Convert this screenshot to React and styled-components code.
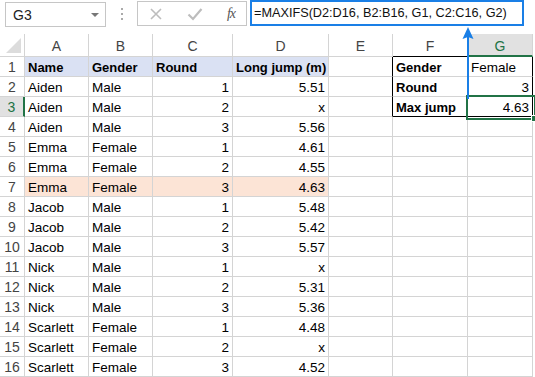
import React from "react";
import styled, { createGlobalStyle } from "styled-components";

const GlobalStyle = createGlobalStyle`
  html, body { margin: 0; padding: 0; background: #fff; }
  body { font-family: "Liberation Sans", Arial, sans-serif; overflow: hidden; }
`;

const GRID = "#d4d4d4";
const GREEN = "#217346";
const BLUE = "#1a7fe6";
const COLS = [25, 64, 64, 80, 96, 64, 75, 65];

const Page = styled.div`
  position: relative;
  width: 535px;
  height: 377px;
  overflow: hidden;
`;

const Toolbar = styled.div`
  display: flex;
  align-items: flex-start;
  height: 27px;
  padding-left: 5px;
`;

const NameBox = styled.div`
  box-sizing: border-box;
  width: 101px;
  height: 25px;
  margin-top: 2px;
  border: 1px solid #c6c6c6;
  display: flex;
  align-items: center;
  justify-content: space-between;
  padding: 0 6px 0 7px;
  font-size: 14px;
  color: #222;
`;

const Caret = styled.span`
  width: 0;
  height: 0;
  border-left: 4px solid transparent;
  border-right: 4px solid transparent;
  border-top: 4px solid #777;
`;

const Dots = styled.div`
  width: 31px;
  height: 27px;
  display: flex;
  flex-direction: column;
  align-items: center;
  justify-content: center;
  gap: 3px;
  span { width: 2px; height: 2px; background: #aaa; }
`;

const Buttons = styled.div`
  box-sizing: border-box;
  width: 110px;
  height: 25px;
  margin-top: 1px;
  border: 1px solid #c6c6c6;
  display: flex;
  align-items: center;
  justify-content: space-between;
  padding: 0 11px 0 11px;
`;

const Fx = styled.span`
  font-family: "Liberation Serif", "Times New Roman", serif;
  font-style: italic;
  font-size: 14px;
  color: #555;
  letter-spacing: -1px;
`;

const FormulaBox = styled.div`
  box-sizing: border-box;
  width: 274px;
  height: 26px;
  margin-left: 3px;
  border: 2px solid ${BLUE};
  display: flex;
  align-items: center;
  padding-left: 2px;
  font-size: 12.7px;
  color: #111;
  white-space: nowrap;
`;

const Sheet = styled.div`
  position: relative;
  margin-top: 7px;
  display: grid;
  grid-template-columns: ${COLS.map((c) => c + "px").join(" ")};
  grid-auto-rows: 20px;
  grid-template-rows: 23px;
`;

const Corner = styled.div`
  position: relative;
  box-sizing: border-box;
  border-right: 1px solid ${GRID};
  border-bottom: 1px solid ${GRID};
  &::after {
    content: "";
    position: absolute;
    right: 3px;
    bottom: 3px;
    width: 0;
    height: 0;
    border-left: 15px solid transparent;
    border-bottom: 15px solid #dcdcdc;
  }
`;

const ColHead = styled.div`
  box-sizing: border-box;
  display: flex;
  align-items: center;
  justify-content: center;
  padding-top: 2px;
  font-size: 14px;
  color: ${(p) => (p.$active ? GREEN : "#444")};
  background: ${(p) => (p.$active ? "#e1e1e1" : "#fff")};
  border-right: 1px solid ${(p) => p.$right || GRID};
  border-bottom: ${(p) =>
    p.$active ? `2px solid ${GREEN}` : `1px solid ${p.$bottom || GRID}`};
`;

const RowHead = styled.div`
  box-sizing: border-box;
  display: flex;
  align-items: center;
  justify-content: center;
  font-size: 14px;
  color: ${(p) => (p.$active ? GREEN : "#444")};
  background: ${(p) => (p.$active ? "#e1e1e1" : "#fff")};
  border-right: ${(p) =>
    p.$active ? `2px solid ${GREEN}` : `1px solid ${GRID}`};
  border-bottom: 1px solid ${GRID};
`;

const Cell = styled.div`
  box-sizing: border-box;
  display: flex;
  align-items: center;
  justify-content: ${(p) => (p.$num ? "flex-end" : "flex-start")};
  padding: 1px 3px 0 3px;
  font-size: ${(p) => (p.$bold ? "13px" : "13.5px")};
  font-weight: ${(p) => (p.$bold ? 700 : 400)};
  color: #000;
  white-space: nowrap;
  overflow: visible;
  background: ${(p) => p.$fill || "#fff"};
  border-right: 1px solid ${(p) => p.$right || GRID};
  border-bottom: 1px solid ${(p) => p.$bottom || GRID};
`;

const Selection = styled.div`
  position: absolute;
  left: ${COLS.slice(0, 7).reduce((a, b) => a + b, 0) - 1}px;
  top: ${23 + 40 - 1}px;
  width: 66px;
  height: 21px;
  border: 2px solid ${GREEN};
  box-sizing: content-box;
  margin: -1px 0 0 -1px;
  pointer-events: none;
  &::after {
    content: "";
    position: absolute;
    right: -4px;
    bottom: -4px;
    width: 5px;
    height: 5px;
    background: ${GREEN};
    border: 1px solid #fff;
  }
`;

const Arrow = styled.svg`
  position: absolute;
  left: 462px;
  top: 27px;
`;

const data = [
  ["Aiden", "Male", 1, "5.51"],
  ["Aiden", "Male", 2, "x"],
  ["Aiden", "Male", 3, "5.56"],
  ["Emma", "Female", 1, "4.61"],
  ["Emma", "Female", 2, "4.55"],
  ["Emma", "Female", 3, "4.63"],
  ["Jacob", "Male", 1, "5.48"],
  ["Jacob", "Male", 2, "5.42"],
  ["Jacob", "Male", 3, "5.57"],
  ["Nick", "Male", 1, "x"],
  ["Nick", "Male", 2, "5.31"],
  ["Nick", "Male", 3, "5.36"],
  ["Scarlett", "Female", 1, "4.48"],
  ["Scarlett", "Female", 2, "x"],
  ["Scarlett", "Female", 3, "4.52"],
];

const side = [
  ["Gender", "Female", false],
  ["Round", "3", true],
  ["Max jump", "4.63", true],
];

const XIcon = () => (
  <svg width="14" height="14" viewBox="0 0 14 14">
    <path d="M2 2 L12 12 M12 2 L2 12" stroke="#bdbdbd" strokeWidth="1.6" />
  </svg>
);

const CheckIcon = () => (
  <svg width="16" height="14" viewBox="0 0 16 14">
    <path d="M1.5 7.5 L6 12 L14.5 2" stroke="#bdbdbd" strokeWidth="2.2" fill="none" />
  </svg>
);

export default function App() {
  const letters = ["A", "B", "C", "D", "E", "F", "G"];
  const rows = [];

  // row 1 header
  const header = ["Name", "Gender", "Round", "Long jump (m)"];

  for (let r = 1; r <= 16; r++) {
    const cells = [];
    cells.push(
      <RowHead key={`h${r}`} $active={r === 3}>
        {r}
      </RowHead>
    );
    let abcd;
    let fill;
    if (r === 1) {
      abcd = header.map((t) => ({ t, bold: true, num: false }));
      fill = "#dae1f3";
    } else {
      const d = data[r - 2];
      abcd = [
        { t: d[0] },
        { t: d[1] },
        { t: d[2], num: true },
        { t: d[3], num: true },
      ];
      fill = r === 7 ? "#fce4d6" : undefined;
    }
    abcd.forEach((c, i) => {
      cells.push(
        <Cell key={`c${r}${i}`} $bold={c.bold} $num={c.num} $fill={fill}>
          {c.t}
        </Cell>
      );
    });
    const inBox = r <= 3;
    const s = inBox ? side[r - 1] : null;
    cells.push(<Cell key={`e${r}`} $right={inBox ? "#000" : undefined} />);
    cells.push(
      <Cell
        key={`f${r}`}
        $bold={inBox}
        $right={inBox ? "#000" : undefined}
        $bottom={r === 3 ? "#000" : undefined}
      >
        {s ? s[0] : ""}
      </Cell>
    );
    cells.push(
      <Cell
        key={`g${r}`}
        $num={s ? s[2] : false}
        $right={inBox ? "#000" : undefined}
        $bottom={r === 3 ? "#000" : undefined}
      >
        {s ? s[1] : ""}
      </Cell>
    );
    rows.push(...cells);
  }

  return (
    <Page>
      <GlobalStyle />
      <Toolbar>
        <NameBox>
          G3
          <Caret />
        </NameBox>
        <Dots>
          <span />
          <span />
          <span />
        </Dots>
        <Buttons>
          <XIcon />
          <CheckIcon />
          <Fx>fx</Fx>
        </Buttons>
        <FormulaBox>=MAXIFS(D2:D16, B2:B16, G1, C2:C16, G2)</FormulaBox>
      </Toolbar>
      <Sheet>
        <Corner />
        {letters.map((l) => (
          <ColHead
            key={l}
            $active={l === "G"}
            $right={l === "E" ? GRID : undefined}
            $bottom={l === "F" ? "#000" : undefined}
          >
            {l}
          </ColHead>
        ))}
        {rows}
        <Selection />
      </Sheet>
      <Arrow width="12" height="72" viewBox="0 0 12 72">
        <path d="M6 0 L11.5 12 L6 10 L0.5 12 Z" fill={BLUE} />
        <rect x="5" y="8" width="2" height="64" fill={BLUE} />
      </Arrow>
    </Page>
  );
}
